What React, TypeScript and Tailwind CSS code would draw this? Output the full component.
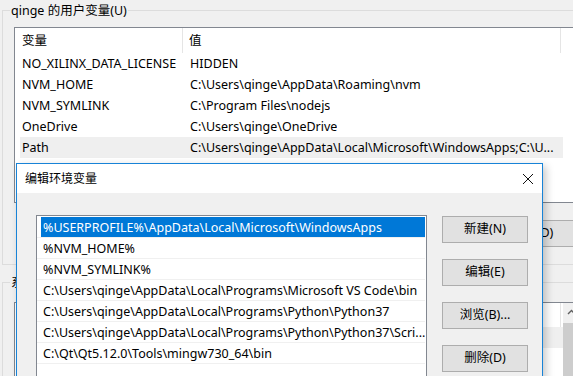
import React from 'react';

const userVars = [
  { name: 'NO_XILINX_DATA_LICENSE', value: 'HIDDEN' },
  { name: 'NVM_HOME', value: 'C:\\Users\\qinge\\AppData\\Roaming\\nvm' },
  { name: 'NVM_SYMLINK', value: 'C:\\Program Files\\nodejs' },
  { name: 'OneDrive', value: 'C:\\Users\\qinge\\OneDrive' },
  { name: 'Path', value: 'C:\\Users\\qinge\\AppData\\Local\\Microsoft\\WindowsApps;C:\\U...' },
];

const pathItems = [
  '%USERPROFILE%\\AppData\\Local\\Microsoft\\WindowsApps',
  '%NVM_HOME%',
  '%NVM_SYMLINK%',
  'C:\\Users\\qinge\\AppData\\Local\\Programs\\Microsoft VS Code\\bin',
  'C:\\Users\\qinge\\AppData\\Local\\Programs\\Python\\Python37',
  'C:\\Users\\qinge\\AppData\\Local\\Programs\\Python\\Python37\\Scri...',
  'C:\\Qt\\Qt5.12.0\\Tools\\mingw730_64\\bin',
];

const WinButton: React.FC<{ label: string; className?: string }> = ({ label, className = '' }) => (
  <button
    type="button"
    className={`h-[27px] bg-[#e1e1e1] border border-[#adadad] text-[12.5px] text-black flex items-center justify-center ${className}`}
  >
    {label}
  </button>
);

export default function App() {
  return (
    <div className="w-[573px] h-[376px] overflow-hidden relative bg-[#f0f0f0] text-[12.5px] text-black font-['Noto_Sans','Noto_Sans_CJK_SC',sans-serif]">
      {/* background window: environment variables */}
      <div className="pt-[2px] pl-[2px]">
        <fieldset className="border border-[#dcdcdc] w-[600px] pb-[17px]">
          <legend className="ml-[7px] px-[1px] leading-[17px]">qinge 的用户变量(U)</legend>
          <div className="mt-[8px] ml-[11px] w-[567px] h-[176px] border border-[#828790] bg-white overflow-hidden">
            <div className="h-[25px] flex items-center">
              <div className="w-[168px] pl-[7px] h-full flex items-center pt-[1px] border-r border-[#e5e5e5]">变量</div>
              <div className="w-[378px] pl-[6px] h-full flex items-center pt-[1px] border-r border-[#e5e5e5]">值</div>
            </div>
            {userVars.map((r, i) => (
              <div
                key={r.name}
                className={`ml-[5px] w-[543px] h-[21px] pt-[1px] flex items-center whitespace-nowrap ${i === 4 ? 'bg-[#efefef]' : ''}`}
              >
                <span className="w-[168px] pl-[2px]">{r.name}</span>
                <span className="pl-[2px] overflow-hidden">{r.value}</span>
              </div>
            ))}
          </div>
          <div className="mt-[17px] ml-[481px] flex">
            <WinButton label="删除(D)" className="w-[97px]" />
          </div>
        </fieldset>
        <fieldset className="border border-[#dcdcdc] w-[600px] mt-[9px] h-[120px]">
          <legend className="ml-[7px] px-[1px] leading-[17px]">系统变量(S)</legend>
          {/* system list, mostly hidden behind the dialog */}
          <div className="mt-[11px] ml-[11px] w-[567px] h-[120px] border border-[#828790] bg-white flex">
            <div className="flex-1">
              <div className="h-[24px] flex">
                <div className="w-[168px] border-r border-[#e5e5e5]" />
                <div className="w-[378px] border-r border-[#e5e5e5]" />
              </div>
              <div className="ml-[5px] w-[543px] h-[21px] bg-[#efefef]" />
            </div>
            <div className="w-[17px] bg-[#f0f0f0] flex flex-col items-center">
              <svg width="9" height="6" viewBox="0 0 9 6" className="mt-[6px]">
                <path d="M1 5 L4.5 1.5 L8 5" stroke="#606060" strokeWidth="1.4" fill="none" />
              </svg>
              <div className="mt-[8px] w-[17px] flex-1 bg-[#cdcdcd]" />
            </div>
          </div>
        </fieldset>
      </div>

      {/* edit dialog on top */}
      <div className="absolute left-[16px] top-[163px] w-[527px] h-[240px] border border-[#1883d7] bg-[#f0f0f0] shadow-[3px_3px_8px_rgba(0,0,0,0.22)]">
        <div className="h-[29px] bg-white flex items-center justify-between pl-[8px] pr-[8px]">
          <span className="text-[12px]">编辑环境变量</span>
          <svg width="12" height="12" viewBox="0 0 12 12">
            <path d="M1 1 L11 11 M11 1 L1 11" stroke="#111" strokeWidth="1" />
          </svg>
        </div>
        <div className="flex pl-[19px] pt-[22px]">
          <div className="w-[391px] h-[200px] border border-[#828790] bg-white pt-[1px] pr-[1px]">
            {pathItems.map((p, i) => (
              <div key={p} className="h-[21px] border-b border-[#f0f0f0] flex">
                <div
                  className={`ml-[4px] flex-1 pl-[2px] pt-[1px] leading-[19px] whitespace-nowrap overflow-hidden ${i === 0 ? 'bg-[#0078d7] text-white' : ''}`}
                >
                  {p}
                </div>
              </div>
            ))}
          </div>
          <div className="ml-[15px] mt-[1px] flex flex-col gap-[16px]">
            <WinButton label="新建(N)" className="w-[86px]" />
            <WinButton label="编辑(E)" className="w-[86px]" />
            <WinButton label="浏览(B)..." className="w-[86px]" />
            <WinButton label="删除(D)" className="w-[86px]" />
          </div>
        </div>
      </div>
    </div>
  );
}
